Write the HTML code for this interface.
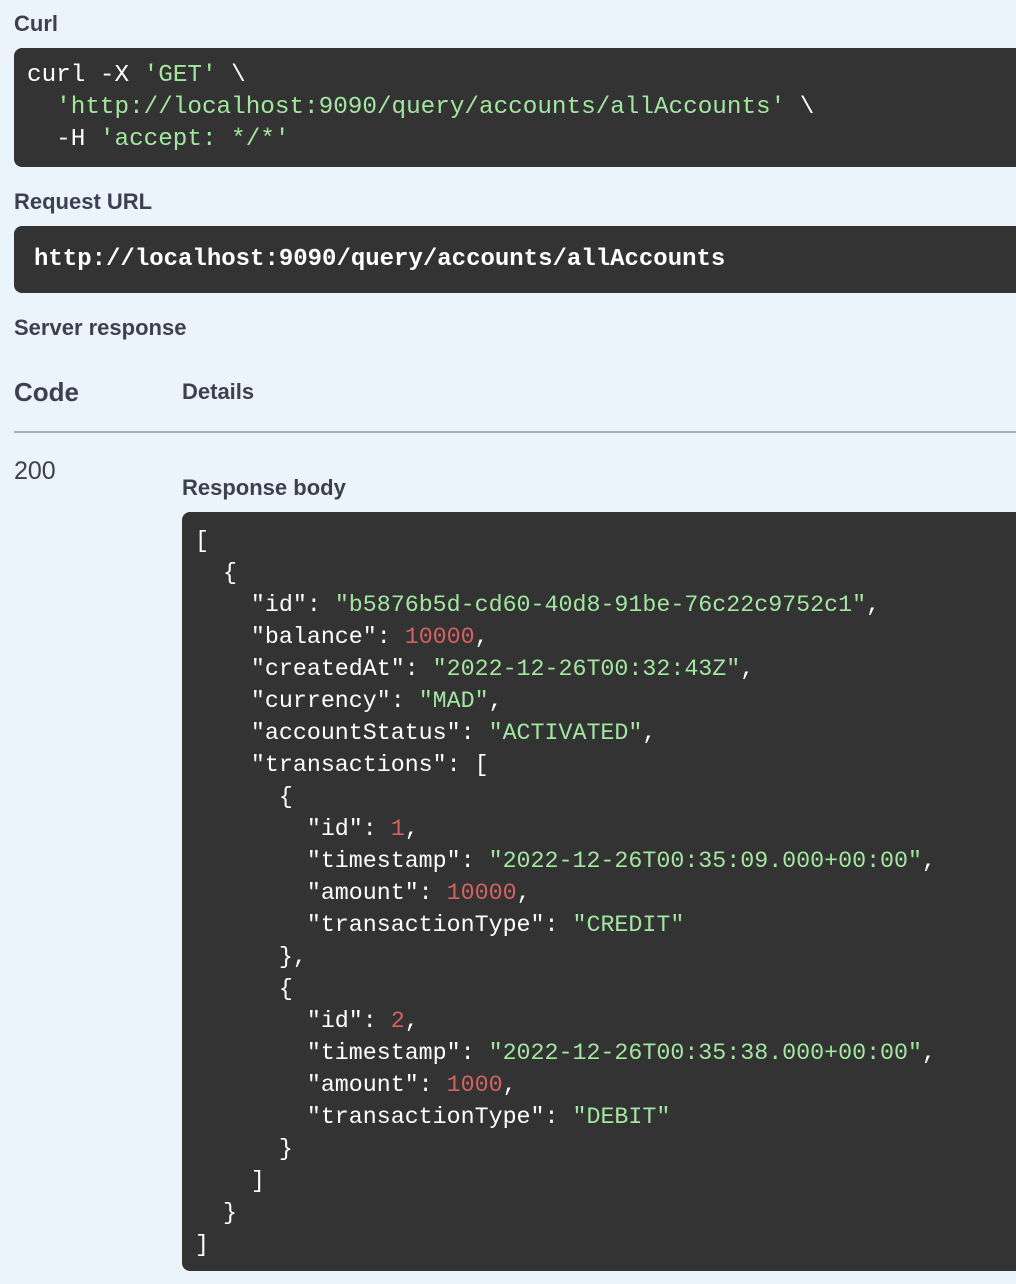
<!DOCTYPE html>
<html><head><style>
body{margin:0;background:#ebf3fb;width:1016px;height:1284px;overflow:hidden;font-family:"Liberation Sans",sans-serif;color:#3b4151;position:relative}
.l{position:absolute;font-weight:bold;font-size:22px;line-height:26px}
.box{position:absolute;background:#333;border-radius:8px;right:-10px}
pre{margin:0;font-family:"Liberation Mono",monospace;color:#fff;white-space:pre}
.s{color:#a2e6a0}.n{color:#d36363}
</style></head><body>
<div class="l" style="left:14px;top:11px">Curl</div>
<div class="box" style="left:14px;top:48px;height:119px">
<pre style="position:absolute;left:13px;top:12px;font-size:24.3px;line-height:32px">curl -X <span class="s">'GET'</span> \
  <span class="s">'http://localhost:9090/query/accounts/allAccounts'</span> \
  -H <span class="s">'accept: */*'</span></pre></div>
<div class="l" style="left:14px;top:189px">Request URL</div>
<div class="box" style="left:14px;top:226px;height:67px">
<pre style="position:absolute;left:20px;top:19px;font-size:24px;line-height:30px;font-weight:bold">http://localhost:9090/query/accounts/allAccounts</pre></div>
<div class="l" style="left:14px;top:315px">Server response</div>
<div class="l" style="left:14px;top:377px;font-size:26px;line-height:30px">Code</div>
<div class="l" style="left:182px;top:379px">Details</div>
<div style="position:absolute;left:14px;right:0;top:431px;height:2px;background:#a9b0b9"></div>
<div style="position:absolute;left:14px;top:456px;font-size:25px;line-height:30px">200</div>
<div class="l" style="left:182px;top:475px">Response body</div>
<div class="box" style="left:182px;top:512px;height:759px">
<pre style="position:absolute;left:13px;top:13px;font-size:23.3px;line-height:32px">[
  {
    "id": <span class="s">"b5876b5d-cd60-40d8-91be-76c22c9752c1"</span>,
    "balance": <span class="n">10000</span>,
    "createdAt": <span class="s">"2022-12-26T00:32:43Z"</span>,
    "currency": <span class="s">"MAD"</span>,
    "accountStatus": <span class="s">"ACTIVATED"</span>,
    "transactions": [
      {
        "id": <span class="n">1</span>,
        "timestamp": <span class="s">"2022-12-26T00:35:09.000+00:00"</span>,
        "amount": <span class="n">10000</span>,
        "transactionType": <span class="s">"CREDIT"</span>
      },
      {
        "id": <span class="n">2</span>,
        "timestamp": <span class="s">"2022-12-26T00:35:38.000+00:00"</span>,
        "amount": <span class="n">1000</span>,
        "transactionType": <span class="s">"DEBIT"</span>
      }
    ]
  }
]</pre></div>
</body></html>
